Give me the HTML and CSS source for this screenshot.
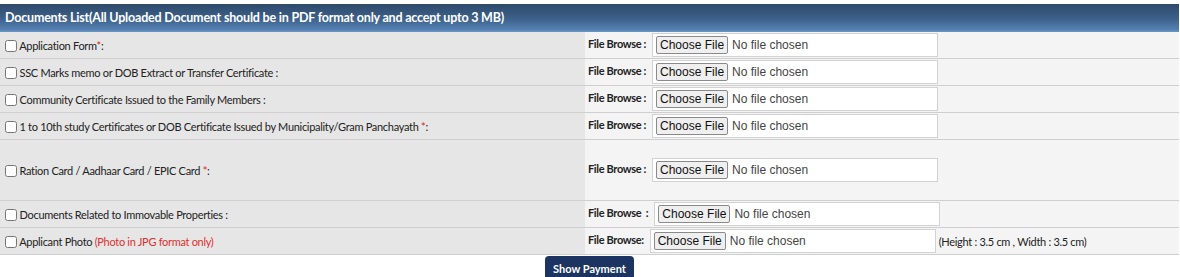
FILE: index.html
```html
<!DOCTYPE html>
<html lang="en">
<head>
    <meta charset="UTF-8">
    <title>Documents List</title>
    <link rel="stylesheet" href="styles.css">
</head>
<body>

<div class="docs">
    <div class="docs-head">Documents List(All Uploaded Document should be in PDF format only and accept upto 3 MB)</div>
    <table class="docs-table">
        <tr>
            <td class="doc-name"><input type="checkbox"> Application Form<span class="req">*</span>:</td>
            <td class="doc-file"><span class="browse">File Browse :</span><input type="file"></td>
        </tr>
        <tr>
            <td class="doc-name"><input type="checkbox"> SSC Marks memo or DOB Extract or Transfer Certificate :</td>
            <td class="doc-file"><span class="browse">File Browse :</span><input type="file"></td>
        </tr>
        <tr>
            <td class="doc-name"><input type="checkbox"> Community Certificate Issued to the Family Members :</td>
            <td class="doc-file"><span class="browse">File Browse :</span><input type="file"></td>
        </tr>
        <tr>
            <td class="doc-name"><input type="checkbox"> 1 to 10th study Certificates or DOB Certificate Issued by Municipality/Gram Panchayath <span class="req">*</span>:</td>
            <td class="doc-file"><span class="browse">File Browse :</span><input type="file"></td>
        </tr>
        <tr class="tall">
            <td class="doc-name"><input type="checkbox"> Ration Card / Aadhaar Card / EPIC Card <span class="req">*</span>:</td>
            <td class="doc-file"><span class="browse">File Browse :</span><input type="file"></td>
        </tr>
        <tr>
            <td class="doc-name"><input type="checkbox"> Documents Related to Immovable Properties :</td>
            <td class="doc-file"><span class="browse">File Browse &nbsp;:</span><input type="file"></td>
        </tr>
        <tr>
            <td class="doc-name"><input type="checkbox"> Applicant Photo <span class="note">(Photo in JPG format only)</span></td>
            <td class="doc-file"><span class="browse">File Browse:</span><input type="file"><span class="size">(Height : 3.5 cm , Width : 3.5 cm)</span></td>
        </tr>
    </table>
    <div class="actions">
        <button type="button" class="pay-btn">Show Payment</button>
    </div>
</div>

</body>
</html>
```

FILE: styles.css
```css
body {
    margin: 0;
    padding: 4px 0 0 0;
    background-color: #fff;
    font-family: Lato, "Liberation Sans", sans-serif;
    font-size: 11px;
    color: #222;
}

.docs {
    width: 1179px;
}

.docs-head {
    height: 28px;
    line-height: 28px;
    padding-left: 5px;
    color: #fff;
    font-size: 12.5px;
    font-weight: bold;
    letter-spacing: -0.2px;
    background: linear-gradient(to bottom, #2d4a6a 0%, #3e628c 55%, #5581b3 92%, #6b98c8 100%);
}

.docs-table {
    width: 100%;
    border-collapse: collapse;
}

.docs-table td {
    height: 26px;
    padding: 0;
    border-bottom: 1px solid #cfcfcf;
    vertical-align: middle;
}

.docs-table tr.tall td {
    height: 60px;
}

.doc-name {
    width: 584px;
    background-color: #e6e6e6;
    padding-left: 1px !important;
    letter-spacing: -0.3px;
}

.doc-name input[type="checkbox"] {
    width: 12px;
    height: 12px;
    margin: 0 0 0 4px;
    vertical-align: -2px;
}

.req {
    color: #e02020;
}

.note {
    color: #e0302c;
}

.doc-file {
    background-color: #f4f4f4;
    padding-left: 3px !important;
    white-space: nowrap;
}

.browse {
    display: inline-block;
    font-weight: bold;
    letter-spacing: -0.35px;
    margin-right: 6px;
}

.doc-file input[type="file"] {
    width: 286px;
    height: 24px;
    box-sizing: border-box;
    padding: 2px 3px;
    border: 1px solid #d2d2d2;
    background-color: #fff;
    font-family: "Liberation Sans", Arial, sans-serif;
    font-size: 12px;
    color: #444;
    vertical-align: middle;
}

.doc-file input[type="file"]::file-selector-button {
    font-family: "Liberation Sans", Arial, sans-serif;
    font-size: 12px;
    padding: 1px 3px;
    margin-right: 4px;
    border: 1px solid #8a8a8a;
    border-radius: 2px;
    background-color: #efefef;
    color: #111;
}

.size {
    margin-left: 3px;
    letter-spacing: -0.3px;
    vertical-align: middle;
}

.actions {
    text-align: center;
    padding-top: 1px;
}

.pay-btn {
    font-family: Lato, "Liberation Sans", sans-serif;
    font-size: 11px;
    font-weight: bold;
    color: #fff;
    white-space: nowrap;
    background-color: #1b3461;
    border: none;
    border-radius: 4px 4px 0 0;
    padding: 6px 0;
    width: 89px;
    cursor: pointer;
}
```
